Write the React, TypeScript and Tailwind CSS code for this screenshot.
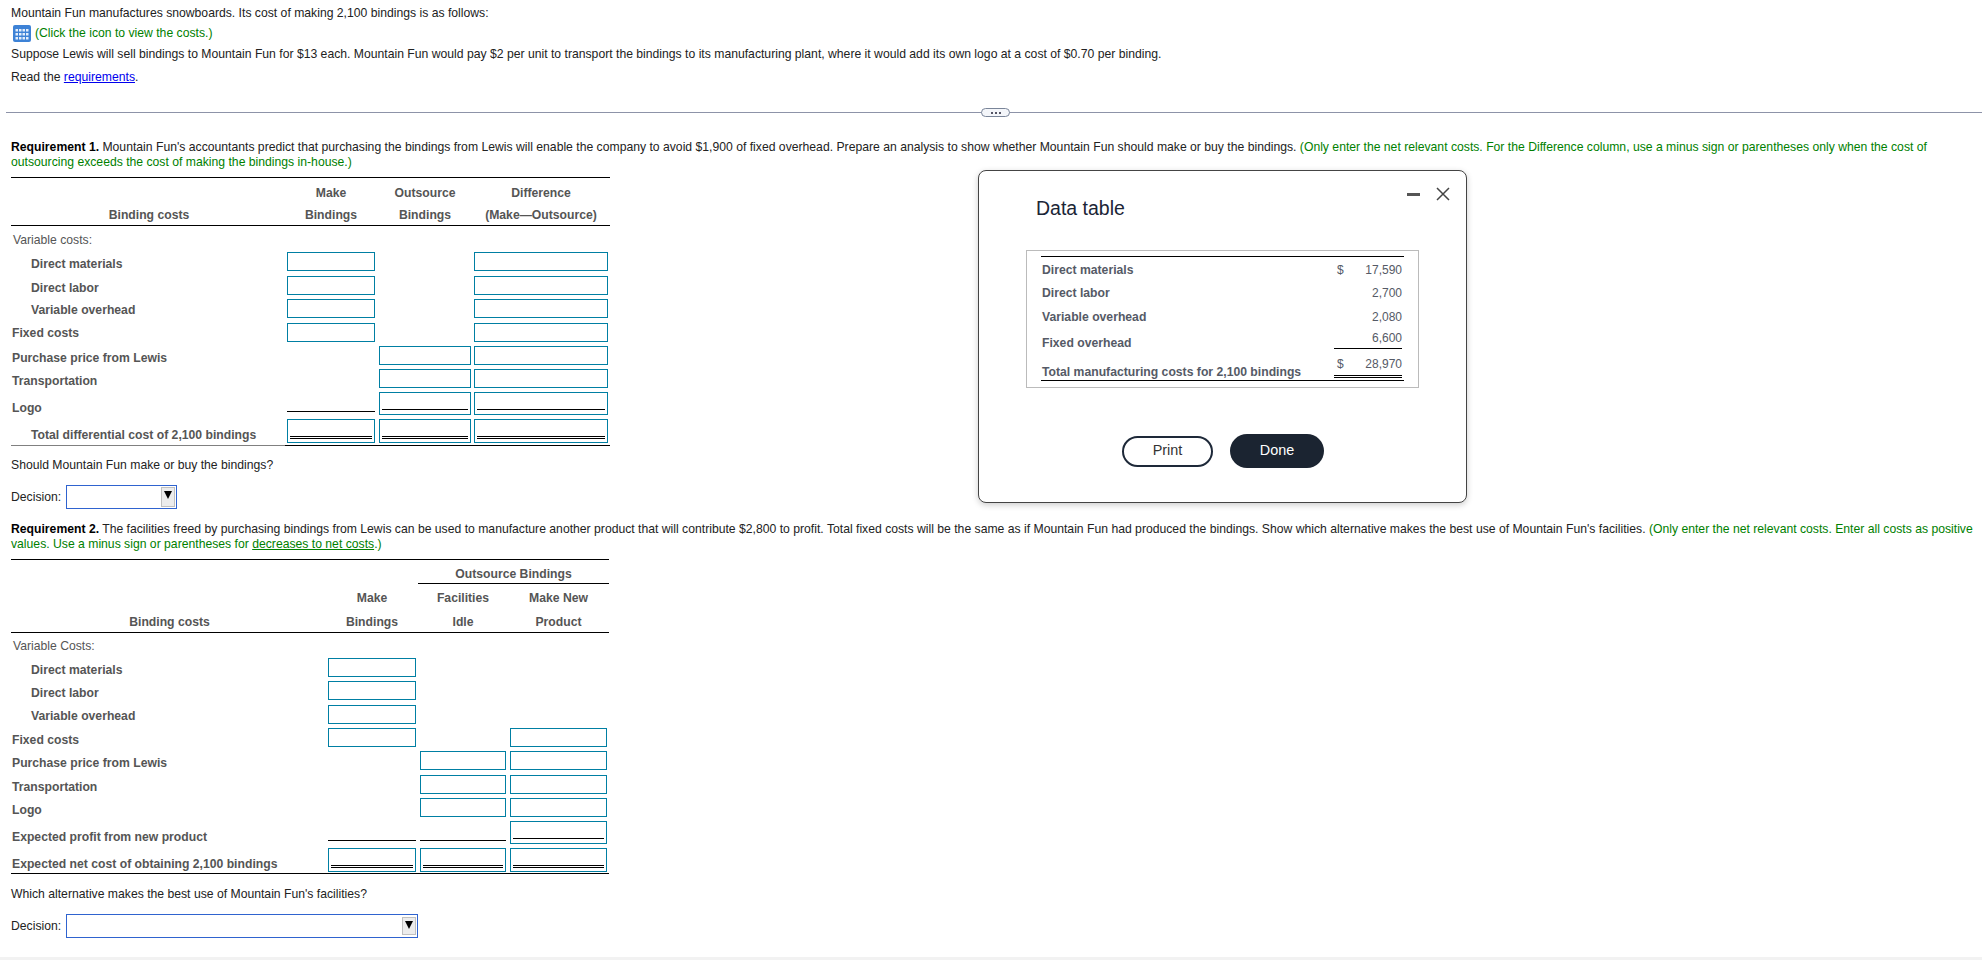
const BoxInput = ({ w, h = 'h-[19px]', line }: { w: string; h?: string; line?: 'single' | 'double' }) => (
  <div className={`${w} ${h} box-border border border-[#007fa3] bg-white flex flex-col justify-end px-[2px] ${line === 'single' ? 'pb-[4px]' : 'pb-[3px]'}`}>
    {line === 'single' && <div className="h-[1px] bg-black" />}
    {line === 'double' && <div className="h-[3px] border-y border-black" />}
  </div>
);

type Cell = null | 'box' | 'single' | 'double' | 'rule';
type Row = { label: string; indent?: boolean; h: string; pt: string; cells: Cell[] };

const CellView = ({ c, w, ruleMt }: { c: Cell; w: string; ruleMt: string }) => {
  if (c === null) return <div className={w} />;
  if (c === 'rule') return <div className={`${w} ${ruleMt} h-[1px] bg-black`} />;
  if (c === 'box') return <BoxInput w={w} />;
  return <BoxInput w={w} h={c === 'single' ? 'h-[23px]' : 'h-[24px]'} line={c} />;
};

const t1Rows: Row[] = [
  { label: 'Direct materials', indent: true, h: 'h-[24px]', pt: 'pt-[5px]', cells: ['box', null, 'box'] },
  { label: 'Direct labor', indent: true, h: 'h-[23px]', pt: 'pt-[5px]', cells: ['box', null, 'box'] },
  { label: 'Variable overhead', indent: true, h: 'h-[24px]', pt: 'pt-[4px]', cells: ['box', null, 'box'] },
  { label: 'Fixed costs', h: 'h-[23px]', pt: 'pt-[3px]', cells: ['box', null, 'box'] },
  { label: 'Purchase price from Lewis', h: 'h-[23px]', pt: 'pt-[5px]', cells: [null, 'box', 'box'] },
  { label: 'Transportation', h: 'h-[23px]', pt: 'pt-[5px]', cells: [null, 'box', 'box'] },
  { label: 'Logo', h: 'h-[27px]', pt: 'pt-[9px]', cells: ['rule', 'single', 'single'] },
];

const t2Rows: Row[] = [
  { label: 'Direct materials', indent: true, h: 'h-[23px]', pt: 'pt-[5px]', cells: ['box', null, null] },
  { label: 'Direct labor', indent: true, h: 'h-[24px]', pt: 'pt-[5px]', cells: ['box', null, null] },
  { label: 'Variable overhead', indent: true, h: 'h-[23px]', pt: 'pt-[4px]', cells: ['box', null, null] },
  { label: 'Fixed costs', h: 'h-[23px]', pt: 'pt-[5px]', cells: ['box', null, 'box'] },
  { label: 'Purchase price from Lewis', h: 'h-[24px]', pt: 'pt-[5px]', cells: [null, 'box', 'box'] },
  { label: 'Transportation', h: 'h-[23px]', pt: 'pt-[5px]', cells: [null, 'box', 'box'] },
  { label: 'Logo', h: 'h-[23px]', pt: 'pt-[5px]', cells: [null, 'box', 'box'] },
  { label: 'Expected profit from new product', h: 'h-[27px]', pt: 'pt-[9px]', cells: ['rule', 'rule', 'single'] },
];

const Label = ({ r }: { r: Row }) => (
  <div className={`${r.pt} ${r.indent ? 'pl-[20px]' : 'pl-[1px]'} flex-1 leading-[14px] font-bold text-[#555]`}>{r.label}</div>
);

const T1 = () => {
  const widths = ['w-[88px]', 'w-[92px]', 'w-[134px]'];
  return (
    <div className="w-[599px]">
      <div className="border-t border-black">
        <div className="flex h-[29px] items-end font-bold text-[#555] leading-[14px] pb-[7px]">
          <div className="flex-1" />
          <div className="w-[88px] text-center">Make</div>
          <div className="w-[92px] ml-[4px] text-center">Outsource</div>
          <div className="w-[134px] ml-[3px] mr-[2px] text-center">Difference</div>
        </div>
        <div className="flex h-[17px] pt-[1px] font-bold text-[#555] leading-[14px] border-b border-black box-content">
          <div className="flex-1 text-center">Binding costs</div>
          <div className="w-[88px] text-center">Bindings</div>
          <div className="w-[92px] ml-[4px] text-center">Bindings</div>
          <div className="w-[134px] ml-[3px] mr-[2px] text-center whitespace-nowrap">(Make—Outsource)</div>
        </div>
      </div>
      <div className="h-[26px] pl-[2px] pt-[7px] leading-[14px] text-[#555]">Variable costs:</div>
      {t1Rows.map((r) => (
        <div key={r.label} className={`flex ${r.h} items-start`}>
          <Label r={r} />
          <CellView c={r.cells[0]} w={widths[0]} ruleMt="mt-[19px]" />
          <div className="ml-[4px]"><CellView c={r.cells[1]} w={widths[1]} ruleMt="mt-[19px]" /></div>
          <div className="ml-[3px] mr-[2px]"><CellView c={r.cells[2]} w={widths[2]} ruleMt="mt-[19px]" /></div>
        </div>
      ))}
      <div className="flex h-[27px] items-start">
        <div className="pt-[9px] pl-[20px] flex-1 leading-[14px] font-bold text-[#555] border-b border-[#808080] h-[27px]">Total differential cost of 2,100 bindings</div>
        <div className="flex h-[27px] border-b border-black pl-[2px] ml-[-2px]">
          <BoxInput w="w-[88px]" h="h-[24px]" line="double" />
          <div className="ml-[4px]"><BoxInput w="w-[92px]" h="h-[24px]" line="double" /></div>
          <div className="ml-[3px] mr-[2px]"><BoxInput w="w-[134px]" h="h-[24px]" line="double" /></div>
        </div>
      </div>
    </div>
  );
};

const T2 = () => {
  const widths = ['w-[88px]', 'w-[86px]', 'w-[97px]'];
  return (
    <div className="w-[598px]">
      <div className="border-t border-black">
        <div className="flex h-[24px]">
          <div className="flex-1" />
          <div className="w-[191px] border-b border-black text-center font-bold text-[#555] leading-[14px] pt-[7px] box-border h-[24px]">Outsource Bindings</div>
        </div>
        <div className="flex h-[24px] font-bold text-[#555] leading-[14px] pt-[7px]">
          <div className="flex-1" />
          <div className="w-[88px] text-center">Make</div>
          <div className="w-[86px] ml-[4px] text-center">Facilities</div>
          <div className="w-[97px] ml-[4px] mr-[2px] text-center">Make New</div>
        </div>
        <div className="flex h-[17px] font-bold text-[#555] leading-[14px] pt-[7px] border-b border-black box-content">
          <div className="flex-1 text-center">Binding costs</div>
          <div className="w-[88px] text-center">Bindings</div>
          <div className="w-[86px] ml-[4px] text-center">Idle</div>
          <div className="w-[97px] ml-[4px] mr-[2px] text-center">Product</div>
        </div>
      </div>
      <div className="h-[25px] pl-[2px] pt-[6px] leading-[14px] text-[#555]">Variable Costs:</div>
      {t2Rows.map((r) => (
        <div key={r.label} className={`flex ${r.h} items-start`}>
          <Label r={r} />
          <CellView c={r.cells[0]} w={widths[0]} ruleMt="mt-[19px]" />
          <div className="ml-[4px]"><CellView c={r.cells[1]} w={widths[1]} ruleMt="mt-[19px]" /></div>
          <div className="ml-[4px] mr-[2px]"><CellView c={r.cells[2]} w={widths[2]} ruleMt="mt-[19px]" /></div>
        </div>
      ))}
      <div className="flex h-[25px] items-start border-b border-black box-content">
        <div className="pt-[9px] pl-[1px] flex-1 leading-[14px] font-bold text-[#555]">Expected net cost of obtaining 2,100 bindings</div>
        <BoxInput w="w-[88px]" h="h-[24px]" line="double" />
        <div className="ml-[4px]"><BoxInput w="w-[86px]" h="h-[24px]" line="double" /></div>
        <div className="ml-[4px] mr-[2px]"><BoxInput w="w-[97px]" h="h-[24px]" line="double" /></div>
      </div>
    </div>
  );
};

const Decision = ({ w, btn }: { w: string; btn: string }) => (
  <div className="flex items-center h-[24px] leading-[14px]">
    <span className="text-[#222] w-[55px]">Decision:</span>
    <div className={`${w} h-[24px] box-border border border-[#2f63cf] flex justify-end items-center pr-[1px] bg-white`}>
      <div className={`w-[14px] ${btn} box-border border border-[#c0c0c0] bg-[#ececec] flex justify-center pt-[3px]`}>
        <svg width="8" height="8" viewBox="0 0 8 8"><path d="M0 0h8L4 8z" fill="#000" /></svg>
      </div>
    </div>
  </div>
);

const GridIcon = () => (
  <svg width="18" height="17" viewBox="0 0 18 17" className="shrink-0">
    <rect x="0" y="0" width="18" height="17" rx="2" fill="#3d82d6" />
    {[4, 8, 12].map((y) =>
      [2.5, 6, 9.5, 13].map((x) => <rect key={`${x}-${y}`} x={x} y={y} width="2.5" height="2.5" fill="#e3eefc" />)
    )}
  </svg>
);

const DataDialog = () => (
  <div className="absolute left-[978px] top-[170px] w-[489px] h-[333px] box-border border border-[#444] rounded-[8px] bg-white shadow-[0_2px_6px_rgba(0,0,0,0.2)]">
    <div className="flex justify-between h-[79px]">
      <div className="ml-[57px] mt-[25px] text-[19.5px] leading-[24px] text-[#1b2536]">Data table</div>
      <div className="flex mr-[16px] mt-[15px] gap-[16px] items-start">
        <div className="w-[13px] h-[3px] mt-[7px] bg-[#555]" />
        <svg width="14" height="14" viewBox="0 0 14 14" className="mt-[1px]"><path d="M1 1l12 12M13 1L1 13" stroke="#444" strokeWidth="1.5" /></svg>
      </div>
    </div>
    <div className="ml-[47px] w-[393px] h-[138px] box-border border border-[#bbb] px-[14px] pt-[5px]">
      <div className="h-[123px] border-y border-black flex box-content w-[363px]">
        <div className="flex-1 pl-[1px] pt-[6px] font-bold text-[#555a66] leading-[14px]">
          <div>Direct materials</div>
          <div className="mt-[9px]">Direct labor</div>
          <div className="mt-[10px]">Variable overhead</div>
          <div className="mt-[12px]">Fixed overhead</div>
          <div className="mt-[15px] whitespace-nowrap">Total manufacturing costs for 2,100 bindings</div>
        </div>
        <div className="w-[68px] mr-[2px] pt-[6px] text-[#555a66] text-[12px] leading-[14px]">
          <div className="flex justify-between pl-[3px]"><span>$</span><span>17,590</span></div>
          <div className="mt-[9px] text-right">2,700</div>
          <div className="mt-[10px] text-right">2,080</div>
          <div className="mt-[7px] text-right pb-[3px] border-b border-black box-content">6,600</div>
          <div className="mt-[8px] flex justify-between pl-[3px] pb-[4px] border-b-[3px] border-double border-black box-content"><span>$</span><span>28,970</span></div>
        </div>
      </div>
    </div>
    <div className="flex mt-[46px] ml-[143px] items-center text-[14.4px]">
      <div className="w-[91px] h-[31px] box-border border-2 border-[#1e2939] rounded-full flex items-center justify-center text-[#333]">Print</div>
      <div className="w-[94px] h-[34px] ml-[17px] rounded-full bg-[#1b2431] flex items-center justify-center text-white">Done</div>
    </div>
  </div>
);

export default function App() {
  return (
    <div className="relative h-[960px] flex flex-col bg-white text-[12.19px] text-[#222] font-['Liberation_Sans',Arial,sans-serif] overflow-hidden">
      <div className="pl-[11px] pt-[6px]">
        <p className="leading-[14px]">Mountain Fun manufactures snowboards. Its cost of making 2,100 bindings is as follows:</p>
        <p className="leading-[14px] mt-[6px] flex items-center h-[14px] pl-[2px]">
          <GridIcon />
          <span className="ml-[4px] text-[#008000]">(Click the icon to view the costs.)</span>
        </p>
        <p className="leading-[14px] mt-[7px]">Suppose Lewis will sell bindings to Mountain Fun for $13 each. Mountain Fun would pay $2 per unit to transport the bindings to its manufacturing plant, where it would add its own logo at a cost of $0.70 per binding.</p>
        <p className="leading-[14px] mt-[9px]">Read the <span className="text-[#0000ee] underline">requirements</span>.</p>
      </div>

      <div className="ml-[6px] mt-[28px] h-[1px] bg-[#8d93a8] relative">
        <div className="absolute left-[975px] top-[-4px] w-[29px] h-[9px] box-border border border-[#7a8599] rounded-full bg-[#f4f6fa] flex items-center justify-center gap-[2px]">
          <span className="w-[2px] h-[2px] bg-[#556]" />
          <span className="w-[2px] h-[2px] bg-[#556]" />
          <span className="w-[2px] h-[2px] bg-[#556]" />
        </div>
      </div>

      <div className="pl-[11px] mt-[27px]">
        <p className="leading-[15px] whitespace-nowrap">
          <b className="text-black">Requirement 1.</b> Mountain Fun's accountants predict that purchasing the bindings from Lewis will enable the company to avoid $1,900 of fixed overhead. Prepare an analysis to show whether Mountain Fun should make or buy the bindings. <span className="text-[#008000]">(Only enter the net relevant costs. For the Difference column, use a minus sign or parentheses only when the cost of<br />outsourcing exceeds the cost of making the bindings in-house.)</span>
        </p>
        <div className="mt-[7px]"><T1 /></div>
        <p className="mt-[12px] leading-[14px]">Should Mountain Fun make or buy the bindings?</p>
        <div className="mt-[13px]"><Decision w="w-[111px]" btn="h-[20px]" /></div>
        <p className="mt-[13px] leading-[15px] whitespace-nowrap">
          <b className="text-black">Requirement 2.</b> The facilities freed by purchasing bindings from Lewis can be used to manufacture another product that will contribute $2,800 to profit. Total fixed costs will be the same as if Mountain Fun had produced the bindings. Show which alternative makes the best use of Mountain Fun's facilities. <span className="text-[#008000]">(Only enter the net relevant costs. Enter all costs as positive<br />values. Use a minus sign or parentheses for <span className="underline">decreases to net costs</span>.)</span>
        </p>
        <div className="mt-[7px]"><T2 /></div>
        <p className="mt-[13px] leading-[14px]">Which alternative makes the best use of Mountain Fun's facilities?</p>
        <div className="mt-[13px]"><Decision w="w-[352px]" btn="h-[18px]" /></div>
      </div>

      <div className="mt-auto h-[3px] bg-[#f2f2f2]" />
      <DataDialog />
    </div>
  );
}
